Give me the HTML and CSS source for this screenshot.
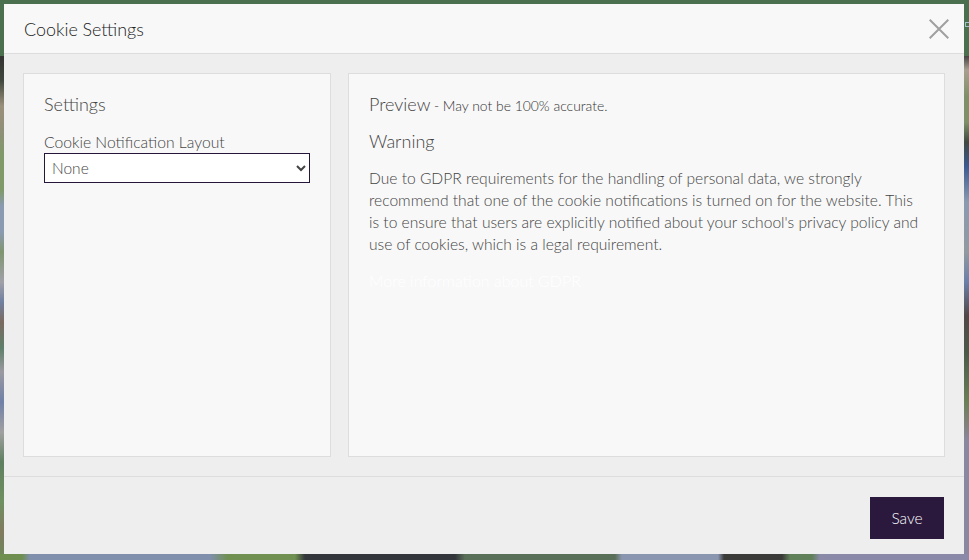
FILE: index.html
```html
<!DOCTYPE html>
<html lang="en">
<head>
<meta charset="utf-8">
<title>Cookie Settings</title>
<link rel="stylesheet" href="styles.css">
</head>
<body>
<div class="backdrop">
  <div class="backdrop-mark"></div>
  <div class="strip-left"></div>
  <div class="strip-right"></div>
  <div class="strip-bottom"></div>
</div>
<div class="modal">
  <header class="modal-header">
    <h1 class="modal-title">Cookie Settings</h1>
    <button class="close" aria-label="Close">
      <svg width="20" height="20" viewBox="0 0 20 20"><path d="M.7.7l18.6 18.6M19.3.7L.7 19.3" fill="none" stroke="#a0a0a0" stroke-width="2"/></svg>
    </button>
  </header>
  <main class="modal-body">
    <section class="panel panel-settings">
      <h2 class="panel-title">Settings</h2>
      <label class="field-label" for="layout">Cookie Notification Layout</label>
      <select class="field-select" id="layout"><option>None</option></select>
    </section>
    <section class="panel panel-preview">
      <h2 class="panel-title preview-title">Preview <small class="preview-note">- May not be 100% accurate.</small></h2>
      <h3 class="panel-title warning-title">Warning</h3>
      <p class="warning-text">Due to GDPR requirements for the handling of personal data, we strongly recommend that one of the cookie notifications is turned on for the website. This is to ensure that users are explicitly notified about your school's privacy policy and use of cookies, which is a legal requirement.</p>
      <a class="more-link" href="#">More information about GDPR</a>
    </section>
  </main>
  <footer class="modal-footer">
    <button class="save">Save</button>
  </footer>
</div>
</body>
</html>
```
FILE: styles.css
```css
* { box-sizing: border-box; }
html, body { margin: 0; height: 100%; overflow: hidden; }
body {
  position: relative;
  width: 969px;
  height: 560px;
  padding: 4px 5px 6px 4px;
  background: #4a7050;
  font-family: "Lato", sans-serif;
  font-weight: 300;
  color: #444;
}
.backdrop { position: absolute; inset: 0; }
.backdrop-mark { position: absolute; left: 965px; top: 22px; width: 4px; height: 5px; border: 1px solid #9cc4cc; border-right: 0; }
.strip-left {
  position: absolute; left: 0; top: 56px; bottom: 0; width: 4px;
  background: linear-gradient(180deg, #333 0, #3f463c 24px, #9a8f7c 50px, #8f8f78 74px, #7f9a68 100px, #7f9a68 134px, #8a9ab0 150px, #8a9ab0 176px, #7f9570 196px, #a0a0a8 226px, #7080a0 246px, #7a6a60 266px, #5f7f6a 292px, #9a9aa0 316px, #7080a8 346px, #a0a0a0 376px, #5f8060 406px, #6f9060 446px, #807a60 476px, #6a8a58 504px);
}
.strip-right {
  position: absolute; right: 0; top: 56px; bottom: 0; width: 5px;
  background: linear-gradient(180deg, #444 0, #a89f90 14px, #7f9068 40px, #7f9068 66px, #404a40 86px, #3a5a90 110px, #8a9ab0 146px, #909aa0 196px, #6a80a8 226px, #504848 260px, #4a5a48 296px, #6a8058 346px, #808078 366px, #8a88a0 386px, #8a88a0 504px);
}
.strip-bottom {
  position: absolute; left: 0; right: 0; bottom: 0; height: 6px;
  background: linear-gradient(90deg, #6f8f50 0 22px, #7f8fac 30px 210px, #6f9050 228px 295px, #33363a 305px 455px, #5a6f58 465px 615px, #8a96b0 622px 718px, #3a3a38 724px 782px, #5f8058 790px 812px, #8a8aa8 820px 969px);
}
.modal {
  position: relative;
  display: flex;
  flex-direction: column;
  height: 100%;
  background: #eee;
}
.modal-header {
  display: flex;
  align-items: center;
  justify-content: space-between;
  height: 50px;
  padding: 0 15px 0 20px;
  background: #f8f8f8;
  border-bottom: 1px solid #ddd;
}
.modal-title { margin: 0; font-size: 17.9px; font-weight: 300; color: #222; }
.close { display: flex; padding: 0; border: 0; background: none; }
.modal-body {
  flex: 1;
  display: flex;
  gap: 17px;
  padding: 19px;
  border-bottom: 1px solid #ddd;
}
.panel {
  background: #f8f8f8;
  border: 1px solid #ddd;
  padding: 19px 20px;
}
.panel-settings { width: 308px; display: flex; flex-direction: column; align-items: flex-start; }
.panel-preview { flex: 1; }
.panel-title { margin: 0; font-size: 18px; font-weight: 300; line-height: 22px; color: #444; }
.panel-settings .panel-title { margin-bottom: 17px; }
.field-label { font-size: 15.7px; line-height: 20px; margin-bottom: 1px; color: #444; }
.field-select {
  width: 266px;
  height: 30px;
  padding: 0 3px;
  background: #fff;
  border: 1px solid #26173a;
  border-radius: 0;
  font: 300 15.5px "Lato", sans-serif;
  color: #444;
}
.preview-note { font-size: 13.9px; font-weight: 300; color: #333; margin-left: -1px; }
.warning-title { margin-top: 13px; }
.warning-text { margin: 15px 0 0; font-size: 15.6px; line-height: 22px; color: #444; }
.more-link { display: block; margin-top: 15px; font-size: 16px; line-height: 22px; color: #fff; text-decoration: none; }
.modal-footer {
  display: flex;
  justify-content: flex-end;
  align-items: flex-start;
  height: 77px;
  padding: 20px 20px 0;
}
.save {
  width: 74px;
  height: 42px;
  background: #2a193d;
  border: 0;
  color: #fff;
  font: 300 15.5px "Lato", sans-serif;
}
```
